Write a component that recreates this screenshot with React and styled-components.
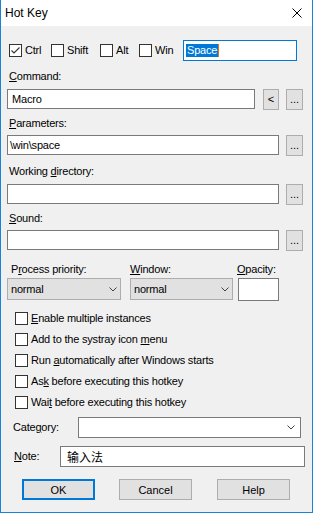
import React from "react";
import styled, { createGlobalStyle } from "styled-components";

const GlobalStyle = createGlobalStyle`
  html, body { margin: 0; padding: 0; background: #f0f0f0; }
  * { box-sizing: border-box; }
`;

const Window = styled.div`
  width: 313px;
  height: 513px;
  border: 1px solid #1883d7;
  border-top: none;
  background: #f0f0f0;
  display: flex;
  flex-direction: column;
  font-family: "Liberation Sans", Arial, sans-serif;
  font-size: 11px;
  letter-spacing: -0.2px;
  color: #000;
  overflow: hidden;
`;

const TitleBar = styled.div`
  height: 26px;
  flex: none;
  background: #fff;
  display: flex;
  align-items: center;
  justify-content: space-between;
  padding: 0 10px 0 4px;
`;

const Title = styled.span`
  font-size: 12px;
  letter-spacing: 0;
`;

const Content = styled.div`
  display: flex;
  flex-direction: column;
  padding: 14px 9px 0 6px;
`;

const HotkeyRow = styled.div`
  display: flex;
  align-items: center;
  height: 21px;
  padding-left: 2px;
`;

const CheckItem = styled.label`
  display: flex;
  align-items: center;
  gap: 3px;
  width: ${(p) => (p.$w ? `${p.$w}px` : "auto")};
  flex: none;
  line-height: 13px;
`;

const Box = styled.span`
  width: 13px;
  height: 13px;
  flex: none;
  border: 1px solid #333;
  background: #fff;
  display: flex;
  align-items: center;
  justify-content: center;
`;

const TextBox = styled.div`
  height: ${(p) => p.$h || 20}px;
  width: ${(p) => (p.$w ? `${p.$w}px` : "auto")};
  flex: ${(p) => (p.$w ? "none" : "1")};
  background: #fff;
  border: 1px solid ${(p) => (p.$focused ? "#0078d7" : "#7a7a7a")};
  display: flex;
  align-items: center;
  padding-left: ${(p) => p.$pl ?? 4}px;
  line-height: 13px;
  white-space: nowrap;
  overflow: hidden;
`;

const Selection = styled.span`
  background: #0078d7;
  color: #fff;
  padding: 0 1px;
  line-height: 13px;
  border-right: 1px solid #d9761f;
`;

const CjkText = styled.span`
  font-family: "Noto Sans CJK SC", "Noto Sans", sans-serif;
  font-size: 12px;
  letter-spacing: 0;
`;

const FieldLabel = styled.div`
  height: 13px;
  line-height: 13px;
  margin-top: ${(p) => p.$mt}px;
  padding-left: ${(p) => p.$pl ?? 2}px;
  white-space: nowrap;
`;

const Key = styled.span`
  text-decoration: underline;
  text-underline-offset: 1px;
`;

const FieldRow = styled.div`
  display: flex;
  align-items: flex-start;
  height: 20px;
  margin-top: ${(p) => p.$mt}px;
`;

const SmallButton = styled.div`
  width: ${(p) => p.$w}px;
  height: 21px;
  flex: none;
  margin-left: ${(p) => p.$ml}px;
  background: #e1e1e1;
  border: 1px solid #adadad;
  display: flex;
  align-items: ${(p) => (p.$dots ? "flex-end" : "center")};
  justify-content: center;
  padding-bottom: ${(p) => (p.$dots ? "4px" : "0")};
  line-height: 11px;
  letter-spacing: 0;
`;

const ComboGrid = styled.div`
  display: grid;
  grid-template-columns: 114px 103px 41px;
  column-gap: 9px;
  grid-template-rows: 13px auto;
  row-gap: 2px;
  margin-top: 13px;
  align-items: start;
`;

const GridLabel = styled.div`
  line-height: 13px;
  white-space: nowrap;
  padding-left: ${(p) => p.$pl ?? 0}px;
  margin-left: ${(p) => p.$ml ?? 0}px;
`;

const Select = styled.div`
  height: ${(p) => p.$h || 22}px;
  width: ${(p) => (p.$w ? `${p.$w}px` : "auto")};
  margin-left: ${(p) => p.$ml ?? 0}px;
  background: ${(p) => (p.$white ? "#fff" : "#e1e1e1")};
  border: 1px solid ${(p) => (p.$white ? "#7a7a7a" : "#adadad")};
  display: flex;
  align-items: center;
  justify-content: space-between;
  padding: 0 ${(p) => p.$pr ?? 3}px 0 3px;
  white-space: nowrap;
`;

const OpacityBox = styled.div`
  height: 23px;
  width: 41px;
  margin-left: -4px;
  background: #fff;
  border: 1px solid #7a7a7a;
`;

const OptionList = styled.div`
  display: flex;
  flex-direction: column;
  margin-top: 7px;
  padding-left: 8px;
`;

const OptionRow = styled.label`
  display: flex;
  align-items: center;
  gap: 3px;
  height: 21px;
  line-height: 13px;
`;

const PairRow = styled.div`
  display: flex;
  align-items: center;
  margin-top: ${(p) => p.$mt}px;
  padding-left: ${(p) => p.$pl}px;
`;

const PairLabel = styled.div`
  width: ${(p) => p.$w}px;
  flex: none;
  line-height: 13px;
  white-space: nowrap;
`;

const ButtonRow = styled.div`
  display: flex;
  gap: 24px;
  margin-top: 12px;
  padding-left: 15px;
`;

const DialogButton = styled.div`
  width: 73px;
  height: 21px;
  background: #e1e1e1;
  border: ${(p) => (p.$default ? "2px solid #0078d7" : "1px solid #adadad")};
  display: flex;
  align-items: center;
  justify-content: center;
  letter-spacing: 0;
  font-size: 11px;
  margin-left: ${(p) => p.$ml ?? 0}px;
`;

const CloseIcon = () => (
  <svg width="10" height="10" viewBox="0 0 10 10">
    <path d="M0.5 0.5 L9.5 9.5 M9.5 0.5 L0.5 9.5" stroke="#000" strokeWidth="1" fill="none" />
  </svg>
);

const CheckMark = () => (
  <svg width="11" height="11" viewBox="0 0 11 11">
    <polyline points="1.5,5.5 4,8 9.5,2.5" stroke="#333" strokeWidth="1.1" fill="none" />
  </svg>
);

const Chevron = () => (
  <svg width="8" height="5" viewBox="0 0 8 5">
    <polyline points="0.5,0.5 4,4 7.5,0.5" stroke="#444" strokeWidth="1" fill="none" />
  </svg>
);

const Check = ({ w, checked, children }) => (
  <CheckItem $w={w}>
    <Box>{checked && <CheckMark />}</Box>
    <span>{children}</span>
  </CheckItem>
);

const Option = ({ children }) => (
  <OptionRow>
    <Box />
    <span>{children}</span>
  </OptionRow>
);

export default function App() {
  return (
    <>
      <GlobalStyle />
      <Window>
        <TitleBar>
          <Title>Hot Key</Title>
          <CloseIcon />
        </TitleBar>
        <Content>
          <HotkeyRow>
            <Check w={42} checked>Ctrl</Check>
            <Check w={49}>Shift</Check>
            <Check w={39}>Alt</Check>
            <Check w={44}>Win</Check>
            <TextBox $w={114} $h={21} $focused $pl={2}>
              <Selection>Space</Selection>
            </TextBox>
          </HotkeyRow>

          <FieldLabel $mt={9}><Key>C</Key>ommand:</FieldLabel>
          <FieldRow $mt={6}>
            <TextBox>Macro</TextBox>
            <SmallButton $w={16} $ml={8}>&lt;</SmallButton>
            <SmallButton $w={17} $ml={7} $dots>...</SmallButton>
          </FieldRow>

          <FieldLabel $mt={8}><Key>P</Key>arameters:</FieldLabel>
          <FieldRow $mt={5}>
            <TextBox $pl={2}>\win\space</TextBox>
            <SmallButton $w={17} $ml={7} $dots>...</SmallButton>
          </FieldRow>

          <FieldLabel $mt={10}>Working <Key>d</Key>irectory:</FieldLabel>
          <FieldRow $mt={6}>
            <TextBox />
            <SmallButton $w={17} $ml={7} $dots>...</SmallButton>
          </FieldRow>

          <FieldLabel $mt={8}><Key>S</Key>ound:</FieldLabel>
          <FieldRow $mt={5}>
            <TextBox />
            <SmallButton $w={17} $ml={7} $dots>...</SmallButton>
          </FieldRow>

          <ComboGrid>
            <GridLabel $pl={4}>P<Key>r</Key>ocess priority:</GridLabel>
            <GridLabel><Key>W</Key>indow:</GridLabel>
            <GridLabel $ml={-5}><Key>O</Key>pacity:</GridLabel>
            <Select>
              <span>normal</span>
              <Chevron />
            </Select>
            <Select>
              <span>normal</span>
              <Chevron />
            </Select>
            <OpacityBox />
          </ComboGrid>

          <OptionList>
            <Option><Key>E</Key>nable multiple instances</Option>
            <Option>Add to the systray icon <Key>m</Key>enu</Option>
            <Option>Run <Key>a</Key>utomatically after Windows starts</Option>
            <Option>As<Key>k</Key> before executing this hotkey</Option>
            <Option>Wai<Key>t</Key> before executing this hotkey</Option>
          </OptionList>

          <PairRow $mt={4} $pl={6}>
            <PairLabel $w={65}>Cate<Key>g</Key>ory:</PairLabel>
            <Select $white $w={223} $h={21} $pr={5}>
              <span />
              <Chevron />
            </Select>
          </PairRow>

          <PairRow $mt={8} $pl={7}>
            <PairLabel $w={46}><Key>N</Key>ote:</PairLabel>
            <TextBox $w={245} $h={21} $pl={6}>
              <CjkText>输入法</CjkText>
            </TextBox>
          </PairRow>

          <ButtonRow>
            <DialogButton $default>OK</DialogButton>
            <DialogButton>Cancel</DialogButton>
            <DialogButton $ml={1}>Help</DialogButton>
          </ButtonRow>
        </Content>
      </Window>
    </>
  );
}
